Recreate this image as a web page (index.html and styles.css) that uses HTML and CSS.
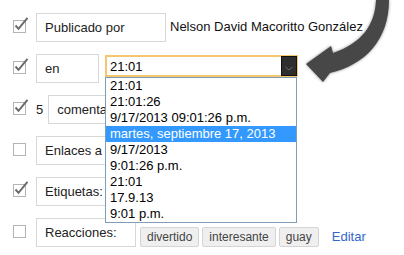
FILE: index.html
```html
<!DOCTYPE html>
<html lang="es">
<head>
<meta charset="utf-8">
<title>Opciones de entrada</title>
<link rel="stylesheet" href="styles.css">
</head>
<body>
<div class="page">
  <div class="row">
    <span class="cb"><svg width="13" height="13" viewBox="0 0 13 13"><polyline points="2.5,5.5 5.5,8.8 14.5,-2.2"/></svg></span>
    <span class="field w-pub">Publicado por</span>
    <span class="value">Nelson David Macoritto González</span>
  </div>
  <div class="row">
    <span class="cb"><svg width="13" height="13" viewBox="0 0 13 13"><polyline points="2.5,5.5 5.5,8.8 14.5,-2.2"/></svg></span>
    <span class="field w-en">en</span>
    <div class="select-wrap">
      <div class="select">
        <span class="sel-text">21:01</span>
        <span class="sel-btn"><svg width="14" height="19" viewBox="0 0 14 19"><polyline points="3.5,10 7,13 10.5,10"/></svg></span>
      </div>
      <ul class="listbox">
        <li>21:01</li>
        <li>21:01:26</li>
        <li>9/17/2013 09:01:26 p.m.</li>
        <li class="active">martes, septiembre 17, 2013</li>
        <li>9/17/2013</li>
        <li>9:01:26 p.m.</li>
        <li>21:01</li>
        <li>17.9.13</li>
        <li>9:01 p.m.</li>
      </ul>
    </div>
  </div>
  <div class="row">
    <span class="cb"><svg width="13" height="13" viewBox="0 0 13 13"><polyline points="2.5,5.5 5.5,8.8 14.5,-2.2"/></svg></span>
    <span class="count">5</span>
    <span class="field w-wide">comentarios</span>
  </div>
  <div class="row">
    <span class="cb"></span>
    <span class="field w-wide">Enlaces a esta entrada</span>
  </div>
  <div class="row">
    <span class="cb"><svg width="13" height="13" viewBox="0 0 13 13"><polyline points="2.5,5.5 5.5,8.8 14.5,-2.2"/></svg></span>
    <span class="field w-wide">Etiquetas:</span>
  </div>
  <div class="row">
    <span class="cb"></span>
    <span class="field w-reac">Reacciones:</span>
    <div class="reactions">
      <span class="btn">divertido</span>
      <span class="btn">interesante</span>
      <span class="btn">guay</span>
    </div>
    <a class="edit" href="#">Editar</a>
  </div>
</div>
<svg class="arrow" width="114" height="90" viewBox="290 0 114 90">
  <path d="M376,0 C375,25 362,43 333,53 L331,46 L306,64 L323,82 L330,73 C365,65 389,40 389,0 Z"/>
</svg>
</body>
</html>
```
FILE: styles.css
```css
html, body {
  margin: 0;
  padding: 0;
  background: #fff;
}
body {
  font-family: "Liberation Sans", Arial, sans-serif;
  font-size: 13px;
  color: #222;
  position: relative;
  width: 404px;
  height: 255px;
  overflow: hidden;
}
.page {
  display: flex;
  flex-direction: column;
  gap: 12px;
  padding: 13px 0 0 13px;
}
.row {
  display: flex;
  align-items: flex-start;
  height: 29px;
}
.cb {
  flex: none;
  position: relative;
  box-sizing: border-box;
  width: 13px;
  height: 13px;
  margin-top: 7px;
  margin-right: 10px;
  border: 1px solid #b4b4b4;
  background: #fff;
}
.cb svg {
  position: absolute;
  left: -1px;
  top: -1px;
  overflow: visible;
}
.cb polyline {
  fill: none;
  stroke: #6b6b6b;
  stroke-width: 2;
}
.field {
  flex: none;
  box-sizing: border-box;
  height: 29px;
  padding: 0 8px 1px;
  border: 1px solid #d8d8d8;
  display: flex;
  align-items: center;
  white-space: nowrap;
  overflow: hidden;
  background: #fff;
}
.w-pub { width: 130px; }
.w-en { width: 63px; }
.w-wide { width: 120px; }
.w-reac { width: 100px; }
.value {
  margin-left: 4px;
  line-height: 28px;
  color: #111;
  white-space: nowrap;
}
.count {
  line-height: 29px;
  margin-right: 5px;
  color: #222;
}
.select-wrap {
  position: relative;
  margin-left: 6px;
  margin-top: 1px;
  width: 193px;
  z-index: 2;
}
.select {
  box-sizing: border-box;
  height: 22px;
  border: 2px solid #f4c670;
  display: flex;
  align-items: center;
  background: #fff;
}
.sel-text {
  flex: 1;
  padding-left: 3px;
  color: #000;
}
.sel-btn {
  box-sizing: border-box;
  width: 16px;
  height: 20px;
  margin-top: -1px;
  margin-right: -1px;
  background: #2e2e2e;
  border: 1px solid #111;
  display: flex;
}
.sel-btn polyline {
  fill: none;
  stroke: #6a6a6a;
  stroke-width: 1;
}
.listbox {
  position: absolute;
  top: 22px;
  left: 0;
  width: 192px;
  box-sizing: border-box;
  margin: 0;
  padding: 0;
  list-style: none;
  border: 1px solid #7f9db9;
  background: #fff;
}
.listbox li {
  height: 16px;
  line-height: 16px;
  padding: 0 4px;
  color: #000;
  white-space: nowrap;
}
.listbox li.active {
  background: #3399ff;
  color: #fff;
}
.reactions {
  display: flex;
  gap: 3px;
  align-self: flex-end;
  margin-left: 4px;
}
.btn {
  box-sizing: border-box;
  height: 20px;
  line-height: 18px;
  padding: 0 6px;
  font-size: 12px;
  color: #444;
  background: #efefef;
  border: 1px solid #d4d4d4;
  border-radius: 2px;
}
.edit {
  align-self: flex-end;
  margin-left: 13px;
  line-height: 20px;
  color: #3366cc;
  text-decoration: none;
}
.arrow {
  position: absolute;
  left: 290px;
  top: 0;
  fill: #474747;
  filter: drop-shadow(0 0 1.5px rgba(0, 0, 0, 0.45));
}
```
